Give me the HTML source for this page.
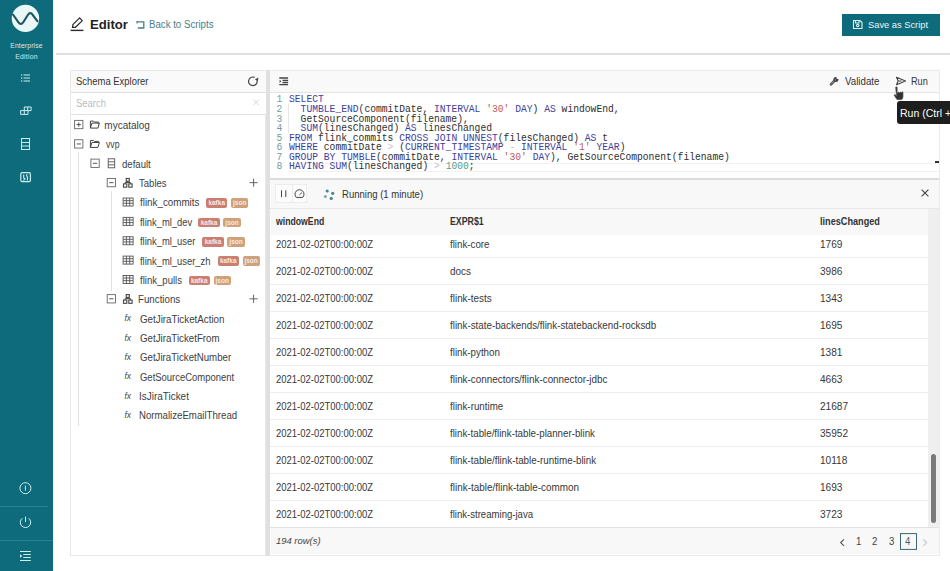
<!DOCTYPE html>
<html><head><meta charset="utf-8">
<style>
*{box-sizing:border-box;margin:0;padding:0}
html,body{width:950px;height:571px;overflow:hidden;background:#fff;font-family:"Liberation Sans",sans-serif;color:#333}
.a{position:absolute}
.t{position:absolute;white-space:pre;line-height:1}
.code{font-family:"Liberation Mono",monospace;font-size:11.1px;line-height:9.56px;white-space:pre;color:#2e2e2e;transform:scaleX(0.871);transform-origin:0 0}
.kw{color:#40409e}
.st{color:#c05858}
.nm{color:#5a9c82}
.op{color:#c4c4c4}
.ln{color:#769c9c}
.tag{position:absolute;height:9.8px;border-radius:2px;color:#f8e8e2;font-size:6.5px;font-weight:bold;line-height:9.8px;text-align:center}
.k{background:#cb7f70}
.j{background:#cfa17b}
svg{position:absolute;overflow:visible}
</style></head><body>

<div class="a" style="left:0;top:0;width:53px;height:571px;background:#0e6b7b"></div>
<svg style="left:0;top:0" width="53" height="60">
<circle cx="25.45" cy="18.4" r="13.7" fill="#e9f7f7"/>
<path d="M12.6 14 L18.3 22.2 Q20.8 25.8 23.3 22.2 L27.8 15 Q30.3 11.2 32.8 15 L37.9 21.8" stroke="#1d5660" stroke-width="2.1" fill="none" stroke-linejoin="round"/>
</svg>
<div class="t" style="left:5.5px;top:43px;width:42px;text-align:center;font-size:6.8px;color:#d5ecec;letter-spacing:0.15px">Enterprise</div>
<div class="t" style="left:5.5px;top:54px;width:42px;text-align:center;font-size:6.8px;color:#d5ecec;letter-spacing:0.25px">Edition</div>
<svg style="left:0;top:0" width="53" height="571" fill="none" stroke="#cdeff0" stroke-width="1">
<g><rect x="21" y="74.4" width="1.2" height="1.2" fill="#cdeff0" stroke="none"/><rect x="21" y="77.4" width="1.2" height="1.2" fill="#cdeff0" stroke="none"/><rect x="21" y="80.4" width="1.2" height="1.2" fill="#cdeff0" stroke="none"/>
<path d="M23.5 75H30M23.5 78H30M23.5 81H30"/></g>
<g><path d="M20.6 110.6h7.4v3.8h-7.4zM24.3 110.6v3.8M24.3 110.6v-3.6h6.8v3.6h-3.1M27.7 107v3.6"/></g>
<g><rect x="21.5" y="138.5" width="8" height="11"/><path d="M21.5 142.5h8M21.5 146h8"/></g>
<g><rect x="20.8" y="172.6" width="9.6" height="9.0" rx="1.3" stroke-width="1.2"/><path d="M23.7 174.6v3.4l1.3 1.1-1.3 1.1v.5M27.4 174.6c-.9.1-1.1 1-.5 1.6l.5.5v3.7" stroke-width="1.1"/></g>
<circle cx="25.4" cy="488.2" r="5.5"/><path d="M25.4 485.6v5"/>
<path d="M22.4 518.2a5.2 5.2 0 1 0 6.2 0M25.5 516.6v5.4"/>
<path d="M20 551.5h10.8M23.3 554.5h7.5M23.3 557.5h7.5M20 560.5h10.8"/><path d="M20 554.2l2.3 1.8-2.3 1.8z" fill="#cdeff0" stroke="none"/>
</svg>
<div class="a" style="left:0;top:506px;width:48px;height:1px;background:#2c8190"></div>
<div class="a" style="left:0;top:540px;width:53px;height:1px;background:#2c8190"></div>
<div class="a" style="left:55.5px;top:53px;width:894.5px;height:1.6px;background:#e0e0e0"></div>
<svg style="left:0;top:0" width="950" height="53" fill="none">
<path d="M72.6 27.4L72.9 24.6L79.6 17.9L82.3 20.6L75.5 27.3Z" stroke="#2a2a2a" stroke-width="1.25" stroke-linejoin="round"/>
<path d="M70.6 30.4h12.8" stroke="#2a2a2a" stroke-width="1.4"/>
<path d="M137 21.8h6.8v6.2h-6" stroke="#4a8088" stroke-width="1.3"/><path d="M137 21v2.6" stroke="#4a8088" stroke-width="1.2"/>
</svg>
<div class="t" style="left:89.65px;top:18.24px;font-size:13.6px;font-weight:bold;font-style:normal;color:#222;transform:scaleX(0.966);transform-origin:0 0">Editor</div>
<div class="t" style="left:148.53px;top:19.80px;font-size:10px;font-weight:normal;font-style:normal;color:#4a8088;transform:scaleX(0.967);transform-origin:0 0">Back to Scripts</div>
<div class="a" style="left:841.5px;top:14px;width:98px;height:21.7px;background:#0e6b7b"></div>
<svg style="left:0;top:0" width="950" height="53" fill="none" stroke="#dff2f2" stroke-width="1.1">
<path d="M853.5 20.5h6.5l2 2v6h-8.5z"/><path d="M855.5 20.5v2.5h3.5v-2.5"/><circle cx="857.7" cy="25.6" r="1.2"/>
</svg>
<div class="t" style="left:867.58px;top:19.88px;font-size:9.9px;font-weight:normal;font-style:normal;color:#e9f5f5;transform:scaleX(0.943);transform-origin:0 0">Save as Script</div>
<div class="a" style="left:70px;top:70px;width:196px;height:486px;border:1px solid #e8e8e8;background:#fff"></div>
<div class="a" style="left:71px;top:71px;width:195px;height:22px;background:#fafafa;border-bottom:1px solid #e0e0e0"></div>
<div class="t" style="left:75.87px;top:76.63px;font-size:10.2px;font-weight:normal;font-style:normal;color:#333;transform:scaleX(0.928);transform-origin:0 0">Schema Explorer</div>
<svg style="left:0;top:0" width="270" height="120" fill="none" stroke="#444" stroke-width="1.1">
<path d="M254.6 77.4A4.3 4.3 0 1 0 257 80.2" stroke-width="1.2"/><path d="M254.9 79.6L257.9 80.9L258.4 77.6Z" fill="#444" stroke="none"/>

</svg>
<div class="a" style="left:71px;top:93px;width:195px;height:22px;background:#fff;border-bottom:1px solid #e2e2e2"></div>
<div class="t" style="left:75.58px;top:98.50px;font-size:10px;font-weight:normal;font-style:normal;color:#bdbdbd;transform:scaleX(0.943);transform-origin:0 0">Search</div>
<svg style="left:0;top:0" width="270" height="120" fill="none"><path d="M253.3 99.6l5.6 5.6M258.9 99.6l-5.6 5.6" stroke="#d4d4d4" stroke-width="1"/></svg>
<div class="t" style="left:104.35px;top:120.98px;font-size:10px;font-weight:normal;font-style:normal;color:#404040">mycatalog</div>
<div class="t" style="left:105.56px;top:140.34px;font-size:10px;font-weight:normal;font-style:normal;color:#404040;transform:scaleX(0.868);transform-origin:0 0">vvp</div>
<div class="t" style="left:122.02px;top:159.70px;font-size:10px;font-weight:normal;font-style:normal;color:#404040;transform:scaleX(0.958);transform-origin:0 0">default</div>
<div class="t" style="left:138.51px;top:179.06px;font-size:10px;font-weight:normal;font-style:normal;color:#404040;transform:scaleX(0.956);transform-origin:0 0">Tables</div>
<div class="t" style="left:139.85px;top:198.42px;font-size:10px;font-weight:normal;font-style:normal;color:#404040;transform:scaleX(0.981);transform-origin:0 0">flink_commits</div>
<div class="t" style="left:139.86px;top:217.78px;font-size:10px;font-weight:normal;font-style:normal;color:#404040;transform:scaleX(0.940);transform-origin:0 0">flink_ml_dev</div>
<div class="t" style="left:139.86px;top:237.14px;font-size:10px;font-weight:normal;font-style:normal;color:#404040;transform:scaleX(0.939);transform-origin:0 0">flink_ml_user</div>
<div class="t" style="left:139.86px;top:256.50px;font-size:10px;font-weight:normal;font-style:normal;color:#404040;transform:scaleX(0.939);transform-origin:0 0">flink_ml_user_zh</div>
<div class="t" style="left:139.86px;top:275.86px;font-size:10px;font-weight:normal;font-style:normal;color:#404040;transform:scaleX(0.956);transform-origin:0 0">flink_pulls</div>
<div class="t" style="left:137.92px;top:295.22px;font-size:10px;font-weight:normal;font-style:normal;color:#404040;transform:scaleX(0.974);transform-origin:0 0">Functions</div>
<div class="t" style="left:124.50px;top:314.15px;font-size:8.5px;font-weight:normal;font-style:italic;color:#444;font-family:"Liberation Serif"">fx</div>
<div class="t" style="left:139.51px;top:314.58px;font-size:10px;font-weight:normal;font-style:normal;color:#404040;transform:scaleX(0.979);transform-origin:0 0">GetJiraTicketAction</div>
<div class="t" style="left:124.50px;top:333.51px;font-size:8.5px;font-weight:normal;font-style:italic;color:#444;font-family:"Liberation Serif"">fx</div>
<div class="t" style="left:139.51px;top:333.94px;font-size:10px;font-weight:normal;font-style:normal;color:#404040;transform:scaleX(0.972);transform-origin:0 0">GetJiraTicketFrom</div>
<div class="t" style="left:124.50px;top:352.87px;font-size:8.5px;font-weight:normal;font-style:italic;color:#444;font-family:"Liberation Serif"">fx</div>
<div class="t" style="left:139.52px;top:353.30px;font-size:10px;font-weight:normal;font-style:normal;color:#404040;transform:scaleX(0.969);transform-origin:0 0">GetJiraTicketNumber</div>
<div class="t" style="left:124.50px;top:372.23px;font-size:8.5px;font-weight:normal;font-style:italic;color:#444;font-family:"Liberation Serif"">fx</div>
<div class="t" style="left:139.53px;top:372.66px;font-size:10px;font-weight:normal;font-style:normal;color:#404040;transform:scaleX(0.947);transform-origin:0 0">GetSourceComponent</div>
<div class="t" style="left:124.50px;top:391.59px;font-size:8.5px;font-weight:normal;font-style:italic;color:#444;font-family:"Liberation Serif"">fx</div>
<div class="t" style="left:139.11px;top:392.02px;font-size:10px;font-weight:normal;font-style:normal;color:#404040;transform:scaleX(0.994);transform-origin:0 0">IsJiraTicket</div>
<div class="t" style="left:124.50px;top:410.95px;font-size:8.5px;font-weight:normal;font-style:italic;color:#444;font-family:"Liberation Serif"">fx</div>
<div class="t" style="left:139.23px;top:411.38px;font-size:10px;font-weight:normal;font-style:normal;color:#404040;transform:scaleX(0.965);transform-origin:0 0">NormalizeEmailThread</div>
<svg style="left:0;top:0" width="270" height="571" fill="none" stroke="#555" stroke-width="0.9"><path d="M78.5 152.44 V425.98" stroke="#dedede"/><path d="M111.5 191.16 V290.96" stroke="#dedede"/><rect x="74.6" y="120.38" width="8.3" height="8.3" stroke="#666"/><path d="M76.6 124.58h4.3" stroke="#444"/><path d="M78.75 122.43v4.3" stroke="#444"/><path d="M90.39999999999999 121.08h3l1 1h4v1.5M90.39999999999999 121.08v7h7.5l1.5-5h-7.5l-1.5 5" stroke="#444" stroke-width="1"/><rect x="74.6" y="139.74" width="8.3" height="8.3" stroke="#666"/><path d="M76.6 143.94h4.3" stroke="#444"/><path d="M90.39999999999999 140.44h3l1 1h4v1.5M90.39999999999999 140.44v7h7.5l1.5-5h-7.5l-1.5 5" stroke="#444" stroke-width="1"/><rect x="90.89999999999999" y="159.10" width="8.3" height="8.3" stroke="#666"/><path d="M92.89999999999999 163.30h4.3" stroke="#444"/><rect x="108.19999999999999" y="158.80" width="6.5" height="9" stroke="#555"/><path d="M108.19999999999999 161.80h6.5M108.19999999999999 164.80h6.5" stroke="#555"/><rect x="107.19999999999999" y="178.46" width="8.3" height="8.3" stroke="#666"/><path d="M109.19999999999999 182.66h4.3" stroke="#444"/><rect x="126.19999999999999" y="178.46" width="3.1" height="2.8" stroke="#444" stroke-width="1.1"/><rect x="123.49999999999999" y="183.86" width="3.3" height="3.3" stroke="#444" stroke-width="1.1"/><rect x="128.79999999999998" y="183.86" width="3.3" height="3.3" stroke="#444" stroke-width="1.1"/><path d="M127.74999999999999 181.26v1.2M125.19999999999999 183.86v-1.4h5.2v1.4" stroke="#444" stroke-width="1"/><path d="M249.5 182.66h8.2M253.6 178.56v8.2" stroke="#555"/><rect x="123.1" y="198.02" width="10" height="8" stroke="#555"/><path d="M123.1 200.62h10M123.1 203.22h10M126.39999999999999 198.02v8M129.7 198.02v8" stroke="#555"/><rect x="123.1" y="217.38" width="10" height="8" stroke="#555"/><path d="M123.1 219.98h10M123.1 222.58h10M126.39999999999999 217.38v8M129.7 217.38v8" stroke="#555"/><rect x="123.1" y="236.74" width="10" height="8" stroke="#555"/><path d="M123.1 239.34h10M123.1 241.94h10M126.39999999999999 236.74v8M129.7 236.74v8" stroke="#555"/><rect x="123.1" y="256.10" width="10" height="8" stroke="#555"/><path d="M123.1 258.70h10M123.1 261.30h10M126.39999999999999 256.10v8M129.7 256.10v8" stroke="#555"/><rect x="123.1" y="275.46" width="10" height="8" stroke="#555"/><path d="M123.1 278.06h10M123.1 280.66h10M126.39999999999999 275.46v8M129.7 275.46v8" stroke="#555"/><rect x="107.19999999999999" y="294.62" width="8.3" height="8.3" stroke="#666"/><path d="M109.19999999999999 298.82h4.3" stroke="#444"/><rect x="126.19999999999999" y="294.62" width="3.1" height="2.8" stroke="#444" stroke-width="1.1"/><rect x="123.49999999999999" y="300.02" width="3.3" height="3.3" stroke="#444" stroke-width="1.1"/><rect x="128.79999999999998" y="300.02" width="3.3" height="3.3" stroke="#444" stroke-width="1.1"/><path d="M127.74999999999999 297.42v1.2M125.19999999999999 300.02v-1.4h5.2v1.4" stroke="#444" stroke-width="1"/><path d="M249.5 298.82h8.2M253.6 294.72v8.2" stroke="#555"/></svg>
<div class="tag k" style="left:206px;top:198.22px;width:21.4px">kafka</div>
<div class="tag j" style="left:231.1px;top:198.22px;width:17.3px">json</div>
<div class="tag k" style="left:198.3px;top:217.58px;width:21.4px">kafka</div>
<div class="tag j" style="left:223.4px;top:217.58px;width:17.3px">json</div>
<div class="tag k" style="left:202.3px;top:236.94px;width:21.4px">kafka</div>
<div class="tag j" style="left:227.4px;top:236.94px;width:17.3px">json</div>
<div class="tag k" style="left:217.5px;top:256.30px;width:21.4px">kafka</div>
<div class="tag j" style="left:242.5px;top:256.30px;width:17.3px">json</div>
<div class="tag k" style="left:188.5px;top:275.66px;width:21.4px">kafka</div>
<div class="tag j" style="left:213.6px;top:275.66px;width:17.3px">json</div>
<div class="a" style="left:266px;top:70px;width:4px;height:486px;background:#e0e0e0"></div>
<div class="a" style="left:270px;top:70px;width:669.5px;height:486px;border:1px solid #ebebeb;border-left:none;background:#fff"></div>
<div class="a" style="left:270px;top:71px;width:668.5px;height:22px;background:#f9f9f9;border-bottom:1px solid #e4e4e4"></div>
<svg style="left:0;top:0" width="950" height="130" fill="none" stroke="#444" stroke-width="1">
<path d="M279.3 78h8.8M282.6 80.4h5.5M282.6 82.5h5.5M279.3 84.6h8.8" stroke-width="1.35"/><path d="M279.6 79.7l1.8 1.6-1.8 1.6z" fill="#444" stroke="none"/>
<path d="M831 84.3l3.4-3.4" stroke="#444" stroke-width="2.6" stroke-linecap="round"/><path d="M831.2 84.1l2.8-2.8" stroke="#bbb" stroke-width="0.8" stroke-linecap="round"/><circle cx="835.9" cy="79.4" r="2.5" fill="#444" stroke="none"/><circle cx="837.6" cy="77.9" r="1.15" fill="#f9f9f9" stroke="none"/><circle cx="835.4" cy="79.9" r=".6" fill="#999" stroke="none"/>
<path d="M896.5 77.2l9 3.8-9 3.8 1.6-3.8z" stroke-width="1.1" stroke-linejoin="round"/><path d="M898 81h3.5"/>
</svg>
<div class="t" style="left:845.05px;top:75.72px;font-size:10.8px;font-weight:normal;font-style:normal;color:#333;transform:scaleX(0.902);transform-origin:0 0">Validate</div>
<div class="t" style="left:911.07px;top:75.52px;font-size:10.8px;font-weight:normal;font-style:normal;color:#333;transform:scaleX(0.849);transform-origin:0 0">Run</div>
<div class="a" style="left:288px;top:162.5px;width:651px;height:1px;background:#f2f2f2"></div>
<div class="a" style="left:288px;top:171px;width:651px;height:1px;background:#f2f2f2"></div>
<div class="a" style="left:288.3px;top:104px;width:1px;height:29px;background:#e6e6e6"></div>
<div class="a code" style="left:270.5px;top:95.4px;width:13px;text-align:right"><span class="ln">1
2
3
4
5
6
7
8</span></div>
<div class="a code" style="left:288.5px;top:95.4px"><span class="kw">SELECT</span>
  <span class="kw">TUMBLE_END</span>(commitDate, <span class="kw">INTERVAL</span> <span class="st">'30'</span> <span class="kw">DAY</span>) <span class="kw">AS</span> windowEnd,
  GetSourceComponent(filename),
  <span class="kw">SUM</span>(linesChanged) <span class="kw">AS</span> linesChanged
<span class="kw">FROM</span> flink_commits <span class="kw">CROSS</span> <span class="kw">JOIN</span> <span class="kw">UNNEST</span>(filesChanged) <span class="kw">AS</span> t
<span class="kw">WHERE</span> commitDate <span class="op">&gt;</span> (<span class="kw">CURRENT_TIMESTAMP</span> <span class="op">-</span> <span class="kw">INTERVAL</span> <span class="st">'1'</span> <span class="kw">YEAR</span>)
<span class="kw">GROUP</span> <span class="kw">BY</span> <span class="kw">TUMBLE</span>(commitDate, <span class="kw">INTERVAL</span> <span class="st">'30'</span> <span class="kw">DAY</span>), GetSourceComponent(filename)
<span class="kw">HAVING</span> <span class="kw">SUM</span>(linesChanged) <span class="op">&gt;</span> <span class="nm">1000</span>;</div>
<div class="a" style="left:935px;top:161px;width:4px;height:1.5px;background:#333"></div>
<div class="a" style="left:270px;top:177.5px;width:669px;height:2.5px;background:#dcdcdc"></div>
<div class="a" style="left:270px;top:180px;width:669px;height:28.5px;background:#f8f8f8;border-bottom:1px solid #e8e8e8"></div>
<div class="a" style="left:275.4px;top:184.3px;width:32px;height:18.3px;border:1px solid #ececec;background:#fcfcfc"></div>
<div class="a" style="left:291.5px;top:184.3px;width:1px;height:18.3px;background:#ececec"></div>
<svg style="left:0;top:0" width="950" height="230" fill="none" stroke="#444" stroke-width="1">
<path d="M281.5 190.3v6.8M285.8 190.3v6.8"/>
<path d="M296.3 197.4A4.5 4.5 0 1 1 302.7 197.4Z" stroke-linejoin="round"/><path d="M299.5 194.8l2.3-2.1"/>
<circle cx="327.2" cy="191" r="1.6" fill="#4a8686" stroke="none"/><circle cx="332.7" cy="193.3" r="1.6" fill="#4a8686" stroke="none"/>
<circle cx="325.4" cy="196.5" r="1.5" fill="#7aa8a8" stroke="none"/><circle cx="331.2" cy="198.4" r="1.6" fill="#4a8686" stroke="none"/>
<path d="M921.6 189.6l6.8 6.8M928.4 189.6l-6.8 6.8" stroke-width="1.1"/>
</svg>
<div class="t" style="left:342.14px;top:189.73px;font-size:10.2px;font-weight:normal;font-style:normal;color:#333;transform:scaleX(0.936);transform-origin:0 0">Running (1 minute)</div>
<div class="a" style="left:270px;top:209px;width:658px;height:26px;background:#f8f8f8"></div>
<div class="t" style="left:276.24px;top:217.11px;font-size:10.1px;font-weight:bold;font-style:normal;color:#333;transform:scaleX(0.861);transform-origin:0 0">windowEnd</div>
<div class="t" style="left:449.63px;top:217.11px;font-size:10.1px;font-weight:bold;font-style:normal;color:#333;transform:scaleX(0.872);transform-origin:0 0">EXPR$1</div>
<div class="t" style="left:820.16px;top:217.11px;font-size:10.1px;font-weight:bold;font-style:normal;color:#333;transform:scaleX(0.905);transform-origin:0 0">linesChanged</div>
<div class="t" style="left:275.73px;top:239.50px;font-size:10px;font-weight:normal;font-style:normal;color:#383838;transform:scaleX(0.948);transform-origin:0 0">2021-02-02T00:00:00Z</div>
<div class="t" style="left:449.85px;top:239.50px;font-size:10px;font-weight:normal;font-style:normal;color:#383838;transform:scaleX(0.974);transform-origin:0 0">flink-core</div>
<div class="t" style="left:820.00px;top:239.50px;font-size:10px;font-weight:normal;font-style:normal;color:#383838;transform:scaleX(1.010);transform-origin:0 0">1769</div>
<div class="a" style="left:270px;top:257px;width:658px;height:1px;background:#ededed"></div>
<div class="t" style="left:275.73px;top:266.50px;font-size:10px;font-weight:normal;font-style:normal;color:#383838;transform:scaleX(0.948);transform-origin:0 0">2021-02-02T00:00:00Z</div>
<div class="t" style="left:449.60px;top:266.50px;font-size:10px;font-weight:normal;font-style:normal;color:#383838;transform:scaleX(0.993);transform-origin:0 0">docs</div>
<div class="t" style="left:820.00px;top:266.50px;font-size:10px;font-weight:normal;font-style:normal;color:#383838;transform:scaleX(1.010);transform-origin:0 0">3986</div>
<div class="a" style="left:270px;top:284px;width:658px;height:1px;background:#ededed"></div>
<div class="t" style="left:275.73px;top:293.50px;font-size:10px;font-weight:normal;font-style:normal;color:#383838;transform:scaleX(0.948);transform-origin:0 0">2021-02-02T00:00:00Z</div>
<div class="t" style="left:449.85px;top:293.50px;font-size:10px;font-weight:normal;font-style:normal;color:#383838;transform:scaleX(0.987);transform-origin:0 0">flink-tests</div>
<div class="t" style="left:820.00px;top:293.50px;font-size:10px;font-weight:normal;font-style:normal;color:#383838;transform:scaleX(1.010);transform-origin:0 0">1343</div>
<div class="a" style="left:270px;top:311px;width:658px;height:1px;background:#ededed"></div>
<div class="t" style="left:275.73px;top:320.50px;font-size:10px;font-weight:normal;font-style:normal;color:#383838;transform:scaleX(0.948);transform-origin:0 0">2021-02-02T00:00:00Z</div>
<div class="t" style="left:449.85px;top:320.50px;font-size:10px;font-weight:normal;font-style:normal;color:#383838;transform:scaleX(0.979);transform-origin:0 0">flink-state-backends/flink-statebackend-rocksdb</div>
<div class="t" style="left:820.00px;top:320.50px;font-size:10px;font-weight:normal;font-style:normal;color:#383838;transform:scaleX(1.010);transform-origin:0 0">1695</div>
<div class="a" style="left:270px;top:338px;width:658px;height:1px;background:#ededed"></div>
<div class="t" style="left:275.73px;top:347.50px;font-size:10px;font-weight:normal;font-style:normal;color:#383838;transform:scaleX(0.948);transform-origin:0 0">2021-02-02T00:00:00Z</div>
<div class="t" style="left:449.85px;top:347.50px;font-size:10px;font-weight:normal;font-style:normal;color:#383838;transform:scaleX(0.975);transform-origin:0 0">flink-python</div>
<div class="t" style="left:820.00px;top:347.50px;font-size:10px;font-weight:normal;font-style:normal;color:#383838;transform:scaleX(1.010);transform-origin:0 0">1381</div>
<div class="a" style="left:270px;top:365px;width:658px;height:1px;background:#ededed"></div>
<div class="t" style="left:275.73px;top:374.50px;font-size:10px;font-weight:normal;font-style:normal;color:#383838;transform:scaleX(0.948);transform-origin:0 0">2021-02-02T00:00:00Z</div>
<div class="t" style="left:449.85px;top:374.50px;font-size:10px;font-weight:normal;font-style:normal;color:#383838;transform:scaleX(0.987);transform-origin:0 0">flink-connectors/flink-connector-jdbc</div>
<div class="t" style="left:820.00px;top:374.50px;font-size:10px;font-weight:normal;font-style:normal;color:#383838;transform:scaleX(1.010);transform-origin:0 0">4663</div>
<div class="a" style="left:270px;top:392px;width:658px;height:1px;background:#ededed"></div>
<div class="t" style="left:275.73px;top:401.50px;font-size:10px;font-weight:normal;font-style:normal;color:#383838;transform:scaleX(0.948);transform-origin:0 0">2021-02-02T00:00:00Z</div>
<div class="t" style="left:449.85px;top:401.50px;font-size:10px;font-weight:normal;font-style:normal;color:#383838;transform:scaleX(0.977);transform-origin:0 0">flink-runtime</div>
<div class="t" style="left:820.00px;top:401.50px;font-size:10px;font-weight:normal;font-style:normal;color:#383838;transform:scaleX(1.010);transform-origin:0 0">21687</div>
<div class="a" style="left:270px;top:419px;width:658px;height:1px;background:#ededed"></div>
<div class="t" style="left:275.73px;top:428.50px;font-size:10px;font-weight:normal;font-style:normal;color:#383838;transform:scaleX(0.948);transform-origin:0 0">2021-02-02T00:00:00Z</div>
<div class="t" style="left:449.85px;top:428.50px;font-size:10px;font-weight:normal;font-style:normal;color:#383838;transform:scaleX(0.973);transform-origin:0 0">flink-table/flink-table-planner-blink</div>
<div class="t" style="left:820.00px;top:428.50px;font-size:10px;font-weight:normal;font-style:normal;color:#383838;transform:scaleX(1.010);transform-origin:0 0">35952</div>
<div class="a" style="left:270px;top:446px;width:658px;height:1px;background:#ededed"></div>
<div class="t" style="left:275.73px;top:455.50px;font-size:10px;font-weight:normal;font-style:normal;color:#383838;transform:scaleX(0.948);transform-origin:0 0">2021-02-02T00:00:00Z</div>
<div class="t" style="left:449.85px;top:455.50px;font-size:10px;font-weight:normal;font-style:normal;color:#383838;transform:scaleX(0.981);transform-origin:0 0">flink-table/flink-table-runtime-blink</div>
<div class="t" style="left:820.00px;top:455.50px;font-size:10px;font-weight:normal;font-style:normal;color:#383838;transform:scaleX(1.010);transform-origin:0 0">10118</div>
<div class="a" style="left:270px;top:473px;width:658px;height:1px;background:#ededed"></div>
<div class="t" style="left:275.73px;top:482.50px;font-size:10px;font-weight:normal;font-style:normal;color:#383838;transform:scaleX(0.948);transform-origin:0 0">2021-02-02T00:00:00Z</div>
<div class="t" style="left:449.85px;top:482.50px;font-size:10px;font-weight:normal;font-style:normal;color:#383838;transform:scaleX(0.993);transform-origin:0 0">flink-table/flink-table-common</div>
<div class="t" style="left:820.00px;top:482.50px;font-size:10px;font-weight:normal;font-style:normal;color:#383838;transform:scaleX(1.010);transform-origin:0 0">1693</div>
<div class="a" style="left:270px;top:500px;width:658px;height:1px;background:#ededed"></div>
<div class="t" style="left:275.73px;top:509.50px;font-size:10px;font-weight:normal;font-style:normal;color:#383838;transform:scaleX(0.948);transform-origin:0 0">2021-02-02T00:00:00Z</div>
<div class="t" style="left:449.86px;top:509.50px;font-size:10px;font-weight:normal;font-style:normal;color:#383838;transform:scaleX(0.958);transform-origin:0 0">flink-streaming-java</div>
<div class="t" style="left:820.00px;top:509.50px;font-size:10px;font-weight:normal;font-style:normal;color:#383838;transform:scaleX(1.010);transform-origin:0 0">3723</div>
<div class="a" style="left:928px;top:209px;width:11px;height:318px;background:#efefef"></div>
<div class="a" style="left:931px;top:454px;width:5px;height:69px;border-radius:2.5px;background:#7a7a7a"></div>
<div class="a" style="left:270px;top:527px;width:669px;height:27px;background:#f8f8f8;border-top:1px solid #e2e2e2"></div>
<div class="t" style="left:275.76px;top:536.37px;font-size:9.8px;font-weight:normal;font-style:italic;color:#444;transform:scaleX(0.963);transform-origin:0 0">194 row(s)</div>
<svg style="left:0;top:0" width="950" height="571" fill="none" stroke="#555" stroke-width="1">
<path d="M844 539.3l-3.3 3.3 3.3 3.3" stroke-width="1.2"/><path d="M923.3 539.3l3.3 3.3-3.3 3.3" stroke="#c8c8c8" stroke-width="1.2"/>
<rect x="900.5" y="533.6" width="16" height="15.8" stroke="#3a6670"/>
</svg>
<div class="t" style="left:856.30px;top:536.90px;font-size:10px;font-weight:normal;font-style:normal;color:#444;transform:scaleX(0.960);transform-origin:0 0">1</div>
<div class="t" style="left:872.00px;top:536.90px;font-size:10px;font-weight:normal;font-style:normal;color:#444;transform:scaleX(0.960);transform-origin:0 0">2</div>
<div class="t" style="left:888.50px;top:536.90px;font-size:10px;font-weight:normal;font-style:normal;color:#444;transform:scaleX(0.960);transform-origin:0 0">3</div>
<div class="t" style="left:905.00px;top:536.90px;font-size:10px;font-weight:normal;font-style:normal;color:#3a6670;transform:scaleX(0.960);transform-origin:0 0">4</div>
<svg style="left:1.6px;top:1px" width="950" height="130">
<path d="M893.5 86.5c0-1 1.8-1 1.8 0v5.5l.5-.3c0-.8 1.6-.8 1.6 0l.3-.2c0-.8 1.6-.8 1.6 0l.3-.2c0-.8 1.5-.8 1.5.1v4c0 1.5-.7 2.6-1.5 3.3h-4.6l-2.8-4.2c-.4-.8.6-1.5 1.3-.8l1 1z" fill="#333" stroke="#666" stroke-width=".5"/>
</svg>
<div class="a" style="left:896.5px;top:101px;width:70px;height:22.5px;border-radius:3px;background:#1e1e1e"></div>
<div class="t" style="left:900.00px;top:108.02px;font-size:10.8px;font-weight:normal;font-style:normal;color:#fff;transform:scaleX(0.972);transform-origin:0 0">Run (Ctrl +</div>
</body></html>
